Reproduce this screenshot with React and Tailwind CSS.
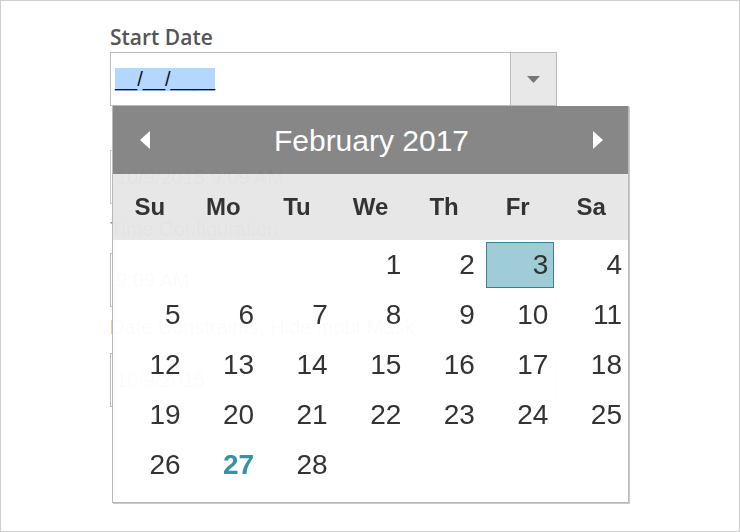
import React from 'react';

const weeks = [
  [null, null, null, 1, 2, 3, 4],
  [5, 6, 7, 8, 9, 10, 11],
  [12, 13, 14, 15, 16, 17, 18],
  [19, 20, 21, 22, 23, 24, 25],
  [26, 27, 28, null, null, null, null],
];

const dayNames = ['Su', 'Mo', 'Tu', 'We', 'Th', 'Fr', 'Sa'];

const selected = 3;
const today = 27;

const DayCell = ({ day }) => {
  if (!day) return <div />;
  if (day === selected) {
    return (
      <div className="pl-[5px] py-[2px]">
        <div className="h-full flex items-center justify-end pr-[5px] border border-[#2a8294] bg-[#9ccbd6]">
          {day}
        </div>
      </div>
    );
  }
  return (
    <div
      className={
        day === today
          ? 'flex items-center justify-end pr-[6px] font-bold text-[#2f8ea3]'
          : 'flex items-center justify-end pr-[6px]'
      }
    >
      {day}
    </div>
  );
};

const Calendar = () => (
  <div className="absolute left-[2px] top-full w-[517px] bg-white border-l border-r border-b border-[#b8b8b8] shadow-[1px_1px_0_#c8c8c8] opacity-[0.97] z-10">
    <div className="h-[68px] bg-[#848484] flex items-center justify-between pl-[27px] pr-[25px]">
      <svg width="10" height="18" viewBox="0 0 10 18">
        <path d="M10 0 L0 9 L10 18 Z" fill="#fff" />
      </svg>
      <span className="text-[30px] text-white">February 2017</span>
      <svg width="10" height="18" viewBox="0 0 10 18">
        <path d="M0 0 L10 9 L0 18 Z" fill="#fff" />
      </svg>
    </div>
    <div className="h-[66px] bg-[#e7e7e7] grid grid-cols-7 items-center text-center text-[24px] font-bold text-[#2d2d2d]">
      {dayNames.map((d) => (
        <div key={d}>{d}</div>
      ))}
    </div>
    <div className="grid grid-cols-7 auto-rows-[50px] pb-[12px] text-[28px] text-[#2d2d2d]">
      {weeks.flat().map((day, i) => (
        <DayCell key={i} day={day} />
      ))}
    </div>
  </div>
);

const App = () => {
  return (
    <div className="w-[740px] h-[532px] border border-[#cfcfcf] bg-white overflow-hidden font-['Liberation_Sans',Arial,sans-serif]">
      <div className="pl-[109px] pt-[22px] w-[558px]">
        <label className="block text-[21px] leading-[28px] font-semibold text-[#555] font-['Open_Sans',sans-serif]">
          Start Date
        </label>

        <div className="relative mt-[1px]">
          <div className="h-[54px] w-[447px] border border-[#bbb] flex">
            <div className="flex-1 flex items-center pl-[4px]">
              <span className="bg-[#b3d7ff] text-[20px] leading-[23px] text-[#111]">__/__/____</span>
            </div>
            <div className="w-[46px] border-l border-[#bbb] bg-[#e8e8e8] flex items-center justify-center">
              <svg width="13" height="7" viewBox="0 0 13 7">
                <path d="M0 0 H13 L6.5 7 Z" fill="#777" />
              </svg>
            </div>
          </div>
          <Calendar />
        </div>

        <div className="mt-[44px] h-[54px] w-[447px] border border-[#ccc] flex items-center pl-[5px] text-[20px] text-[#888]">
          10/9/2015 9:09 AM
        </div>
        <div className="mt-[11px] text-[20px] leading-[28px] text-[#888]">Time Configuration</div>
        <div className="mt-[10px] h-[54px] w-[447px] border border-[#bbb] flex items-center pl-[5px] text-[20px] text-[#888]">
          9:09 AM
        </div>
        <div className="mt-[6px] text-[20px] leading-[28px] text-[#888]">Date Constraints, Hide Input Mask</div>
        <div className="mt-[12px] h-[54px] w-[447px] border border-[#bbb] flex items-center pl-[5px] text-[20px] text-[#888]">
          10/9/2015
        </div>
      </div>
    </div>
  );
};

export default App;
